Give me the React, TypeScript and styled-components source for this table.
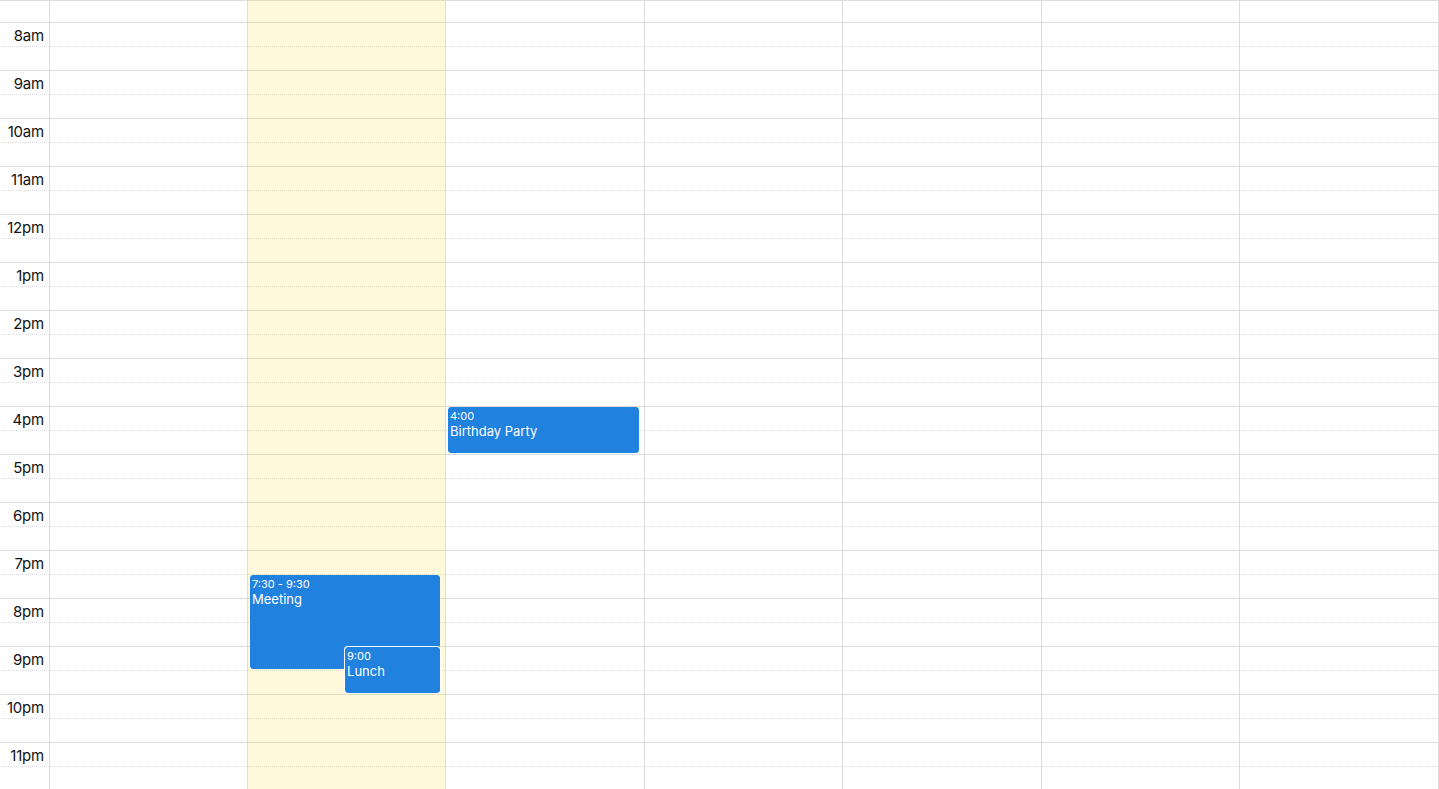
import React from "react";
import styled, { createGlobalStyle } from "styled-components";

const Global = createGlobalStyle`
  html, body { margin: 0; padding: 0; background: #fff; overflow: hidden; }
  body { font-family: Inter, "Liberation Sans", Arial, sans-serif; color: #111; }
`;

const Calendar = styled.div`
  position: relative;
  width: 1439px;
  height: 789px;
  overflow: hidden;
`;

const Slots = styled.div`
  display: flex;
  flex-direction: column;
`;

const Slot = styled.div<{ $minor?: boolean; $first?: boolean }>`
  display: flex;
  flex: none;
  height: ${(p) => (p.$first ? 22 : 24)}px;
  box-sizing: border-box;
  border-top: 1px ${(p) => (p.$minor ? "dotted" : "solid")} #ddd;
`;

const SlotLabel = styled.div`
  width: 49px;
  flex: none;
  box-sizing: border-box;
  padding: 4px 5px 0 0;
  text-align: right;
  font-size: 15px;
  line-height: 18px;
  letter-spacing: -0.2px;
  white-space: nowrap;
`;

const Columns = styled.div`
  position: absolute;
  top: 0;
  left: 49px;
  right: 0;
  bottom: 0;
  display: grid;
  grid-template-columns: 198px 198px 199px 198px 199px 198px 199px;
  border-right: 1px solid #ddd;
`;

const DayCol = styled.div<{ $today?: boolean }>`
  position: relative;
  border-left: 1px solid #ddd;
  background: ${(p) => (p.$today ? "rgba(255, 220, 40, 0.17)" : "transparent")};
`;

const EventsLayer = styled.div`
  position: relative;
  height: 100%;
  margin: 0 2.5% 0 2px;
`;

const Event = styled.div<{ $stacked?: boolean }>`
  position: absolute;
  box-sizing: border-box;
  background: #2181df;
  border: 1px solid #2181df;
  border-radius: 3px;
  color: #fff;
  padding: 1px 1px 0;
  overflow: hidden;
  box-shadow: ${(p) => (p.$stacked ? "0 0 0 1px #fff" : "none")};
`;

const EventTime = styled.div`
  font-size: 11px;
  line-height: 13px;
  margin-top: 1px;
  white-space: nowrap;
`;

const EventTitle = styled.div`
  font-size: 13px;
  line-height: 16px;
  white-space: nowrap;
`;

const yOf = (min: number) => 22 + ((min - 480) / 30) * 24;

const labels = ["8am", "9am", "10am", "11am", "12pm", "1pm", "2pm", "3pm", "4pm", "5pm", "6pm", "7pm", "8pm", "9pm", "10pm", "11pm"];

type Ev = { day: number; start: number; end: number; time: string; title: string; left: string; stacked?: boolean };

const events: Ev[] = [
  { day: 1, start: 19 * 60 + 30, end: 21 * 60 + 30, time: "7:30 - 9:30", title: "Meeting", left: "0" },
  { day: 1, start: 21 * 60, end: 22 * 60, time: "9:00", title: "Lunch", left: "50%", stacked: true },
  { day: 2, start: 16 * 60, end: 17 * 60, time: "4:00", title: "Birthday Party", left: "0" },
];

export default function App() {
  return (
    <>
      <Global />
      <Calendar>
        <Slots>
          <Slot $first>
            <SlotLabel />
          </Slot>
          {labels.map((l) => (
            <React.Fragment key={l}>
              <Slot>
                <SlotLabel>{l}</SlotLabel>
              </Slot>
              <Slot $minor>
                <SlotLabel />
              </Slot>
            </React.Fragment>
          ))}
        </Slots>
        <Columns>
          {Array.from({ length: 7 }).map((_, d) => (
            <DayCol key={d} $today={d === 1}>
              <EventsLayer>
                {events
                  .filter((e) => e.day === d)
                  .map((e) => {
                    const top = yOf(e.start) + 1;
                    const height = yOf(e.end) - yOf(e.start) - 2;
                    return (
                      <Event key={e.title} $stacked={e.stacked} style={{ top, height, left: e.left, right: 0 }}>
                        <EventTime>{e.time}</EventTime>
                        <EventTitle>{e.title}</EventTitle>
                      </Event>
                    );
                  })}
              </EventsLayer>
            </DayCol>
          ))}
        </Columns>
      </Calendar>
    </>
  );
}
